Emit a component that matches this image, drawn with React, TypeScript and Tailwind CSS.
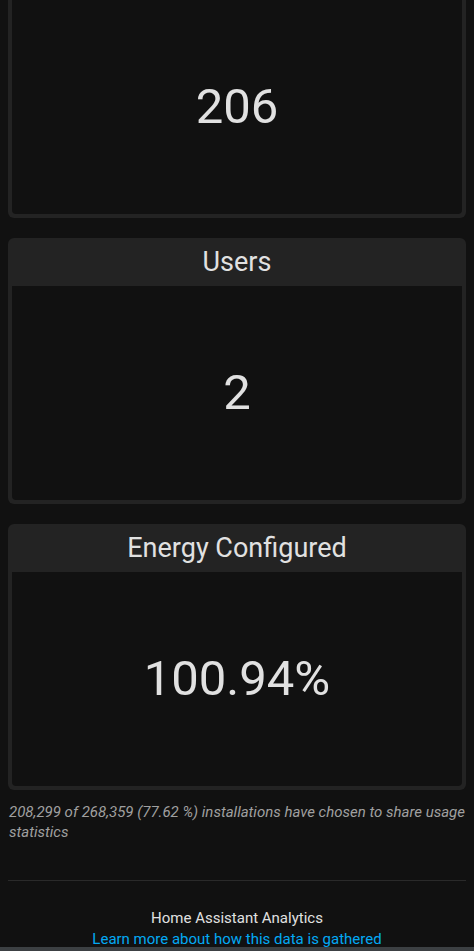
import React from 'react';

interface StatCardProps {
  title: string;
  value: string;
}

const StatCard: React.FC<StatCardProps> = ({ title, value }) => {
  return (
    <div className="flex h-[266px] flex-col rounded-md bg-[#232323] px-1 pb-1">
      <div className="flex h-12 items-center justify-center text-[27px] text-[#e1e1e1]">
        {title}
      </div>
      <div className="flex flex-1 items-center justify-center rounded-b-sm bg-[#111111] text-[49px] text-[#e1e1e1]">
        {value}
      </div>
    </div>
  );
};

const stats = [
  { title: 'Devices', value: '206' },
  { title: 'Users', value: '2' },
  { title: 'Energy Configured', value: '100.94%' }
];

export default function App() {
  return (
    <div
      className="relative min-h-screen overflow-hidden bg-[#111111] px-2"
      style={{ fontFamily: 'Roboto, "Liberation Sans", sans-serif' }}
    >
      {/* page is scrolled: first card's header sits above the viewport */}
      <div className="-mt-12 flex flex-col gap-5">
        {stats.map((s) => (
          <StatCard key={s.title} title={s.title} value={s.value} />
        ))}
      </div>

      <p className="mt-3 px-[1px] text-[15px] italic leading-5 text-[#a0a0a0]">
        208,299 of 268,359 (77.62 %) installations have chosen to share usage statistics
      </p>

      <div className="mt-[38px] border-t border-[#2a2a2a]" />

      <div className="flex flex-col items-center pt-[27px] text-[15px] leading-[21px]">
        <span className="text-[#e1e1e1]">Home Assistant Analytics</span>
        <a href="#" className="text-[#03a9f4]">
          Learn more about how this data is gathered
        </a>
      </div>

      <div className="fixed inset-x-0 bottom-0 h-1 bg-[#3c4043]" />
    </div>
  );
}
